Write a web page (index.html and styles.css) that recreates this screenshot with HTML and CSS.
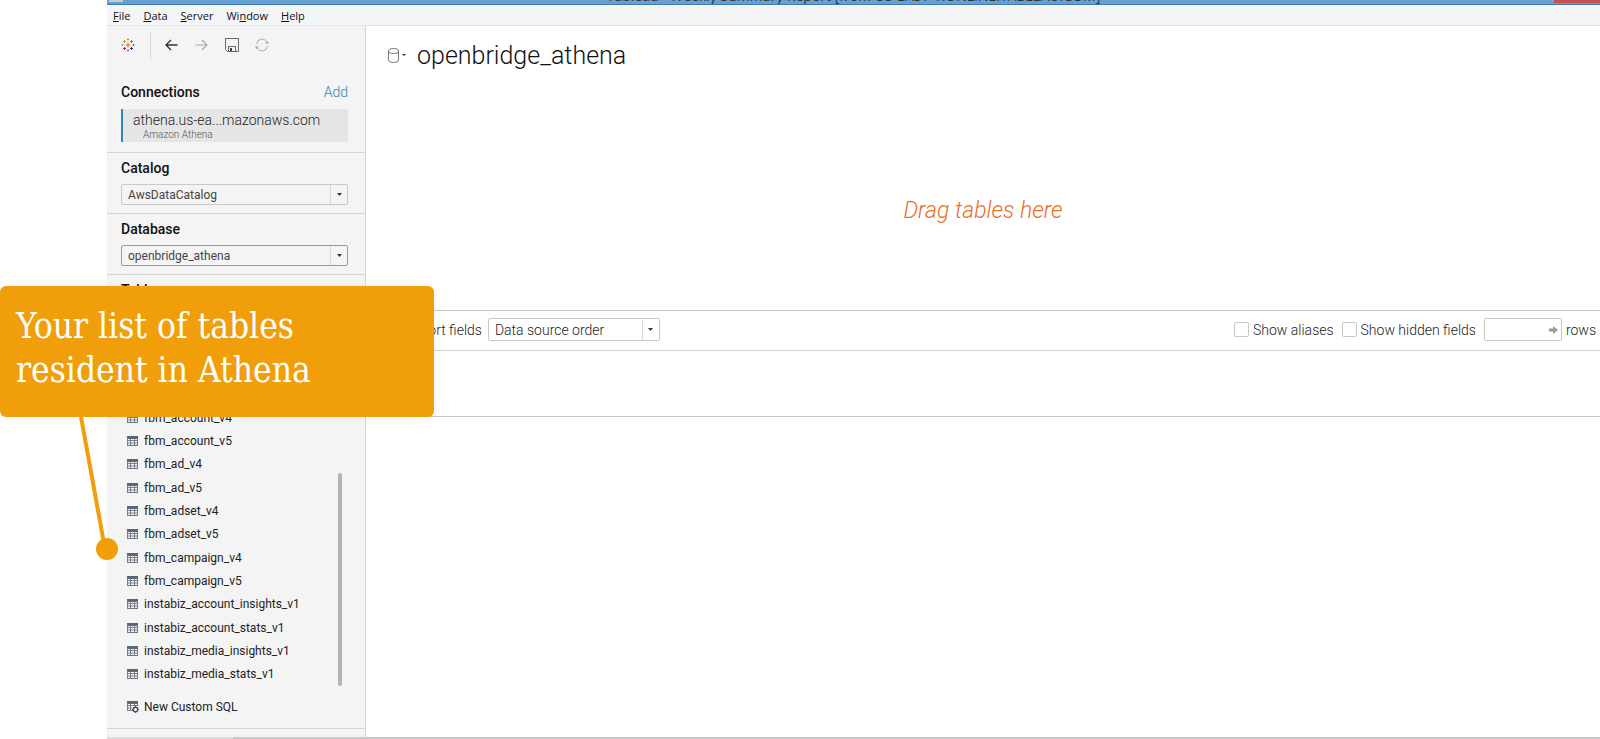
FILE: index.html
```html
<!DOCTYPE html>
<html lang="en">
<head>
  <meta charset="UTF-8">
  <meta name="viewport" content="width=device-width, initial-scale=1.0">
  <title>Tableau - Weekly Summary Report</title>
  <link rel="stylesheet" href="styles.css">
</head>
<body>
  <svg class="symbols" aria-hidden="true">
    <symbol id="table-icon" viewBox="0 0 11 10">
      <path d="M0 0h11v3H0z" fill="#5b6675"/>
      <path d="M.5 2v7.500h10V2M3.500 2v7.500M7.500 2v7.500M0 4.500h11M0 7h11M0 9.500h11" fill="none" stroke="#6b7582" stroke-width=".9"/>
    </symbol>
    <symbol id="arrow-icon" viewBox="0 0 5 3">
      <path d="M0 0h5L2.500 3z" fill="#333"/>
    </symbol>
  </svg>

  <div class="window">
    <header class="titlebar">
      <span class="app-icon"></span>
      <span class="window-title">Tableau - Weekly Summary Report [from US-EAST-1.ONLINE.TABLEAU.COM]</span>
      <button class="close" aria-label="Close"></button>
    </header>
    <nav class="menu">
      <a href="#"><u>F</u>ile</a>
      <a href="#"><u>D</u>ata</a>
      <a href="#"><u>S</u>erver</a>
      <a href="#">Wi<u>n</u>dow</a>
      <a href="#"><u>H</u>elp</a>
    </nav>

    <div class="content">
      <aside class="sidebar">
        <div class="toolbar">
          <button class="logo" aria-label="Start page">
            <svg width="14" height="14" viewBox="0 0 14 14" fill="none">
              <path d="M7 4.500v5M4.500 7h5" stroke="#e8762c" stroke-width="1.200"/>
              <path d="M3.500 2v3M2 3.500h3" stroke="#eb912c"/>
              <path d="M10.500 2v3M9 3.500h3" stroke="#5b879b"/>
              <path d="M3.500 9v3M2 10.500h3" stroke="#c72035"/>
              <path d="M10.500 9v3M9 10.500h3" stroke="#1f457e"/>
              <path d="M7 .5v2M6 1.500h2M.5 7h2M1.500 6v2" stroke="#7199a6"/>
              <path d="M7 11.500v2M6 12.500h2M11.500 7h2M12.500 6v2" stroke="#5c6692"/>
            </svg>
          </button>
          <button aria-label="Back">
            <svg width="14" height="12" viewBox="0 0 14 12" fill="none" stroke="#333" stroke-width="1.400"><path d="M12.500 6H1M6 1L1 6l5 5"/></svg>
          </button>
          <button aria-label="Forward">
            <svg width="14" height="12" viewBox="0 0 14 12" fill="none" stroke="#aaa" stroke-width="1.200"><path d="M.5 6H12M7 1l5 5-5 5"/></svg>
          </button>
          <button aria-label="Save">
            <svg width="14" height="14" viewBox="0 0 14 14" fill="none" stroke="#666"><path d="M.5.5h13v13H2.500l-2-2zM3.500 13V8.500h7V13"/><path d="M5 10h2v3H5z" fill="#444" stroke="none"/></svg>
          </button>
          <button aria-label="Refresh">
            <svg width="14" height="14" viewBox="0 0 14 14" fill="none" stroke="#aaa"><path d="M1.500 6A5.500 5.500 0 0 1 12 4.500M12.500 8A5.500 5.500 0 0 1 2 9.500"/><path d="M10 5.500h4L12.500 3zM0 8.500h4L1.500 11z" fill="#aaa" stroke="none"/></svg>
          </button>
        </div>

        <section class="connections">
          <div class="heading-row">
            <h2>Connections</h2>
            <a href="#">Add</a>
          </div>
          <div class="connection">
            <div class="host">athena.us-ea...mazonaws.com</div>
            <div class="type">Amazon Athena</div>
          </div>
        </section>

        <section class="picker">
          <h2><label for="catalog">Catalog</label></h2>
          <div class="select">
            <select id="catalog"><option>AwsDataCatalog</option></select>
            <span><svg width="5" height="3"><use href="#arrow-icon"/></svg></span>
          </div>
        </section>

        <section class="picker">
          <h2><label for="database">Database</label></h2>
          <div class="select active">
            <select id="database"><option>openbridge_athena</option></select>
            <span><svg width="5" height="3"><use href="#arrow-icon"/></svg></span>
          </div>
        </section>

        <section class="tables">
          <h2>Table</h2>
          <div class="list">
            <ul>
              <li><svg width="11" height="10"><use href="#table-icon"/></svg>fbm_account_v4</li>
              <li><svg width="11" height="10"><use href="#table-icon"/></svg>fbm_account_v5</li>
              <li><svg width="11" height="10"><use href="#table-icon"/></svg>fbm_ad_v4</li>
              <li><svg width="11" height="10"><use href="#table-icon"/></svg>fbm_ad_v5</li>
              <li><svg width="11" height="10"><use href="#table-icon"/></svg>fbm_adset_v4</li>
              <li><svg width="11" height="10"><use href="#table-icon"/></svg>fbm_adset_v5</li>
              <li><svg width="11" height="10"><use href="#table-icon"/></svg>fbm_campaign_v4</li>
              <li><svg width="11" height="10"><use href="#table-icon"/></svg>fbm_campaign_v5</li>
              <li><svg width="11" height="10"><use href="#table-icon"/></svg>instabiz_account_insights_v1</li>
              <li><svg width="11" height="10"><use href="#table-icon"/></svg>instabiz_account_stats_v1</li>
              <li><svg width="11" height="10"><use href="#table-icon"/></svg>instabiz_media_insights_v1</li>
              <li><svg width="11" height="10"><use href="#table-icon"/></svg>instabiz_media_stats_v1</li>
            </ul>
            <div class="scrollbar"></div>
          </div>
          <button class="custom-sql">
            <svg width="12" height="12" viewBox="0 0 12 12" fill="none">
              <path d="M0 0h11v3H0z" fill="#5b6675"/>
              <path d="M.5 2v7.500H6M3.500 2v7.500M7.500 2v3M0 4.500h11M0 7h5M10.500 2v3" stroke="#6b7582" stroke-width=".9"/>
              <circle cx="8.500" cy="8.500" r="2.300" stroke="#445062" stroke-width="1.400"/>
              <path d="M8.500 5v1M8.500 11v1M5 8.500h1M11 8.500h1" stroke="#445062"/>
            </svg>
            New Custom SQL
          </button>
        </section>
      </aside>

      <main>
        <div class="canvas">
          <div class="source">
            <button aria-label="Data source type">
              <svg width="20" height="16" viewBox="0 0 20 16" fill="none" stroke="#777">
                <ellipse cx="6.500" cy="3" rx="5" ry="2.500"/>
                <path d="M1.500 3v9c0 3.300 10 3.300 10 0V3"/>
                <path d="M15 6h4l-2 2z" fill="#333" stroke="none"/>
              </svg>
            </button>
            <h1>openbridge_athena</h1>
          </div>
          <p class="drop-hint">Drag tables here</p>
        </div>
        <form class="grid-bar">
          <label for="sort">Sort fields</label>
          <div class="select">
            <select id="sort"><option>Data source order</option></select>
            <span><svg width="5" height="3"><use href="#arrow-icon"/></svg></span>
          </div>
          <div class="options">
            <label><input type="checkbox">Show aliases</label>
            <label><input type="checkbox">Show hidden fields</label>
            <div class="rows">
              <input type="text" id="rows">
              <svg width="9" height="8" viewBox="0 0 9 8"><path d="M0 2.500h4V0l5 4-5 4V5.500H0z" fill="#999"/></svg>
            </div>
            <label for="rows">rows</label>
          </div>
        </form>
        <div class="grid-head"></div>
      </main>
    </div>

    <footer class="tabs"><span></span></footer>
  </div>

  <div class="callout">
    <p>Your list of tables<br>resident in Athena</p>
    <svg width="40" height="144" viewBox="0 0 40 144">
      <path d="M3 0l24 132" stroke="#f09f0a" stroke-width="4"/>
      <circle cx="29" cy="132" r="11" fill="#f09f0a"/>
    </svg>
  </div>
</body>
</html>
```

FILE: styles.css
```css
* {
  box-sizing: border-box;
}
body {
  margin: 0;
  background: #fff;
  color: #222;
  font-family: Roboto, "Liberation Sans", sans-serif;
  font-size: 14px;
  font-weight: 300;
}
h1, h2, p, ul {
  margin: 0;
  padding: 0;
}
button {
  display: flex;
  align-items: center;
  padding: 0;
  border: none;
  background: none;
  font: inherit;
  color: inherit;
}
a {
  text-decoration: none;
}
svg {
  display: block;
  flex: none;
}
.symbols {
  position: absolute;
  width: 0;
  height: 0;
}
.window {
  display: flex;
  flex-direction: column;
  min-height: 100vh;
  margin-left: 107px;
}

/* title bar and menu */
.titlebar {
  display: flex;
  align-items: flex-end;
  height: 5px;
  overflow: hidden;
  background: #689fd3;
  border-bottom: 1px solid #3a7abf;
}
.app-icon {
  width: 14px;
  height: 2px;
  margin: 0 30px 2px 2px;
  background: #c5ccd2;
}
.window-title {
  flex: 1;
  text-align: center;
  font: 14px/16px "Open Sans", sans-serif;
  color: #333;
}
.close {
  width: 46px;
  height: 3px;
  margin-bottom: 1px;
  background: #c75050;
}
.menu {
  display: flex;
  gap: 13px;
  height: 21px;
  padding-left: 6px;
  border-top: 1px solid #fff;
  border-bottom: 1px solid #e2e4e6;
  background: #f4f5f7;
  font: 11px/20px "Open Sans", sans-serif;
}
.menu a {
  color: #111;
}
.content {
  display: flex;
  flex: 1;
}

/* sidebar */
.sidebar {
  display: flex;
  flex-direction: column;
  width: 259px;
  background: #f4f4f4;
  border-right: 1px solid #d4d4d4;
}
.sidebar h2 {
  font-size: 14px;
  line-height: 20px;
  font-weight: 500;
  color: #111;
}
.toolbar {
  display: flex;
  align-items: center;
  gap: 16px;
  height: 38px;
  padding-left: 14px;
}
.logo {
  height: 27px;
  padding-right: 15px;
  margin-right: -2px;
  border-right: 1px solid #d8d8d8;
}
.connections {
  padding: 18px 17px 10px 14px;
  border-bottom: 1px solid #d4d4d4;
}
.heading-row {
  display: flex;
  justify-content: space-between;
  line-height: 20px;
}
.heading-row a {
  color: #2d86bd;
}
.connection {
  margin-top: 7px;
  height: 33px;
  padding-left: 10px;
  border-left: 2px solid #2d86bd;
  background: #e5e5e5;
}
.host {
  line-height: 22px;
}
.type {
  padding-left: 10px;
  font-size: 10px;
  line-height: 8px;
  color: #555;
}
.picker {
  height: 61px;
  padding: 5px 17px 0 14px;
  border-bottom: 1px solid #d4d4d4;
}
.picker .select {
  margin-top: 6px;
}
.select {
  display: grid;
  height: 21px;
  border: 1px solid #c8c8c8;
  border-radius: 2px;
}
.select.active {
  border-color: #999;
}
.select select {
  grid-area: 1 / 1;
  appearance: none;
  width: 100%;
  padding: 0 24px 0 6px;
  border: none;
  background: none;
  font: inherit;
  font-size: 12px;
  font-weight: 400;
  color: #444;
}
.select span {
  grid-area: 1 / 1;
  justify-self: end;
  display: grid;
  place-items: center;
  width: 17px;
  border-left: 1px solid #d8d8d8;
  pointer-events: none;
}
.tables {
  display: flex;
  flex-direction: column;
  flex: 1;
  padding: 5px 17px 0 14px;
}
.list {
  display: flex;
  justify-content: space-between;
  flex: 1;
  margin-top: 106px;
}
.list ul {
  display: flex;
  flex-direction: column;
  list-style: none;
}
.list li {
  display: flex;
  flex: 1;
  align-items: center;
  gap: 6px;
  padding-left: 6px;
  font-size: 12px;
  font-weight: 400;
}
.scrollbar {
  align-self: flex-end;
  width: 4px;
  height: 213px;
  margin-right: 6px;
  border-radius: 2px;
  background: #b3b3b3;
}
.custom-sql {
  gap: 5px;
  height: 43px;
  margin: 0 -17px 8px -14px;
  padding-left: 20px;
  border-bottom: 1px solid #d4d4d4;
  font-size: 12px;
  font-weight: 400;
}

/* canvas and data grid */
main {
  display: flex;
  flex-direction: column;
  flex: 1;
}
.canvas {
  height: 284px;
}
.source {
  display: flex;
  align-items: center;
  gap: 10px;
  padding: 14px 0 0 21px;
}
.source h1 {
  font-size: 25px;
  line-height: 32px;
  font-weight: 300;
  color: #111;
}
.drop-hint {
  padding-top: 123px;
  text-align: center;
  font-size: 23px;
  line-height: 32px;
  font-style: italic;
  color: #ed6e1f;
}
.grid-bar {
  display: flex;
  align-items: center;
  height: 41px;
  padding: 0 4px 2px 54px;
  border-top: 1px solid #c8c8c8;
  border-bottom: 1px solid #d0d0d0;
}
.grid-bar .select {
  width: 172px;
  height: 23px;
  margin-left: 6px;
}
.grid-bar select {
  font-size: 14px;
  font-weight: 300;
  color: #222;
}
.options {
  display: flex;
  align-items: center;
  gap: 8px;
  margin-left: auto;
}
.options label {
  display: flex;
  align-items: center;
  gap: 4px;
}
.options input[type="checkbox"] {
  appearance: none;
  width: 15px;
  height: 15px;
  margin: 0;
  border: 1px solid #c8c8c8;
  border-radius: 2px;
}
.rows {
  display: flex;
  align-items: center;
  width: 78px;
  height: 23px;
  padding-right: 3px;
  margin-right: -4px;
  border: 1px solid #c8c8c8;
  border-radius: 2px;
}
.rows input {
  flex: 1;
  min-width: 0;
  border: none;
  background: none;
}
.grid-head {
  height: 66px;
  border-bottom: 1px solid #c8c8c8;
}
.tabs {
  height: 2px;
  background: #c8c8c8;
}
.tabs span {
  display: block;
  width: 126px;
  height: 2px;
  background: #dedede;
}

/* annotation laid over the window */
.callout {
  position: absolute;
  top: 286px;
  left: 0;
}
.callout p {
  width: 434px;
  height: 131px;
  padding: 18px 16px;
  border-radius: 6px;
  background: #f09f0a;
  color: #fff;
  font: 35px/44px "DejaVu Serif Condensed", "DejaVu Serif", serif;
}
.callout svg {
  margin-left: 78px;
}
```
